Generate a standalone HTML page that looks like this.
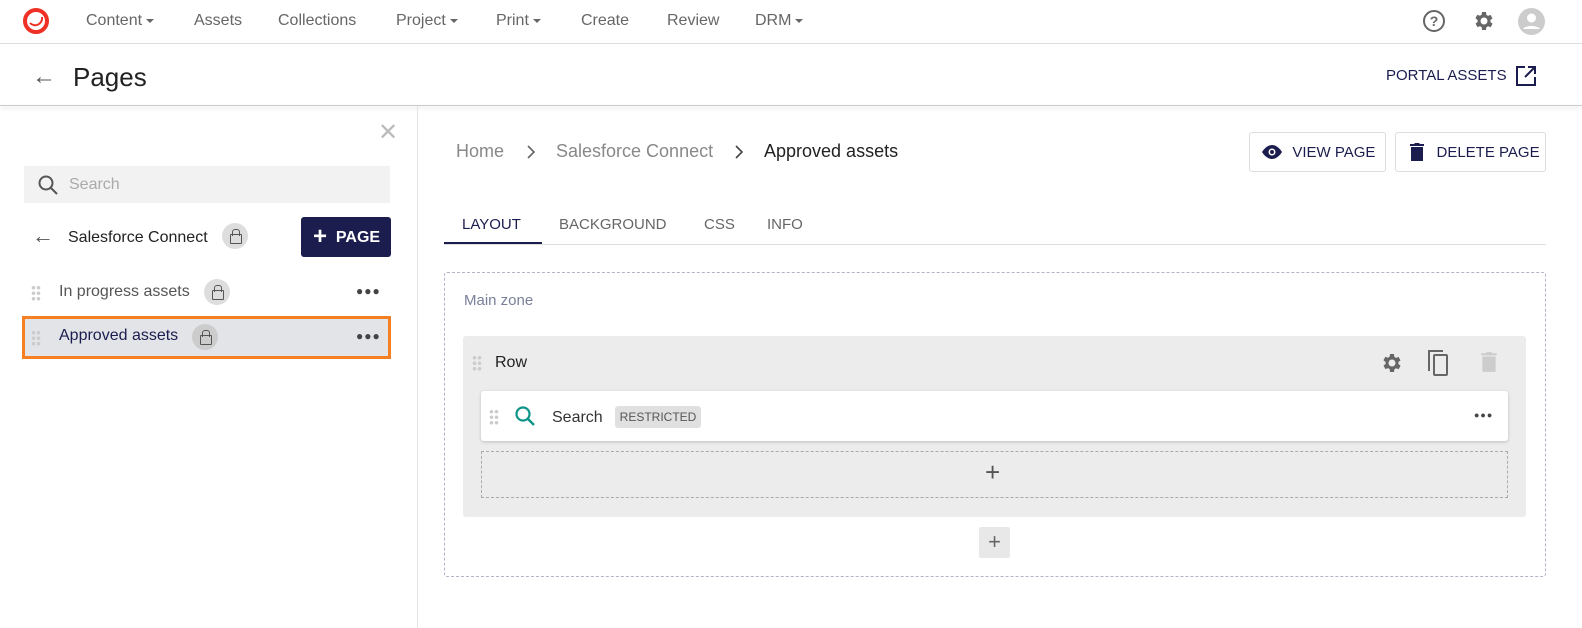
<!DOCTYPE html>
<html><head><style>
*{box-sizing:border-box;margin:0;padding:0}
body{width:1582px;height:628px;font-family:"Liberation Sans",sans-serif;background:#fff;position:relative;overflow:hidden;color:#333}
.a{position:absolute}
.nav{font-size:16px;color:#666;top:12px}
.car{display:inline-block;border-left:4px solid transparent;border-right:4px solid transparent;border-top:4px solid #666;vertical-align:middle;margin-left:4px}
.lock{display:inline-block;width:26px;height:26px;border-radius:50%;background:#ddd;position:absolute}
.lock:after{content:"";position:absolute;left:8px;top:11px;width:10px;height:8px;border:1.5px solid #555;border-radius:1px}
.lock:before{content:"";position:absolute;left:10px;top:6px;width:6px;height:6px;border:1.5px solid #555;border-bottom:none;border-radius:3px 3px 0 0}
.dots{position:absolute;width:10px;height:16px;background:radial-gradient(circle,#ccc 1.6px,transparent 2px) 0 0/5px 5.5px}
.more{position:absolute;font-size:12px;color:#444;letter-spacing:1px}
.btn{position:absolute;border:1px solid #ddd;border-radius:3px;height:40px;top:132px;font-size:15px;color:#1b1d4e;display:flex;align-items:center}
</style></head><body>
<svg class="a" style="left:22px;top:7px" width="28" height="28" viewBox="0 0 28 28"><circle cx="14" cy="14" r="11" fill="none" stroke="#ee3124" stroke-width="4"/><path d="M8 16a7 7 0 0 0 12 -6" fill="none" stroke="#ee3124" stroke-width="2"/></svg>
<div class="a nav" style="left:86px">Content<span class="car"></span></div>
<div class="a nav" style="left:194px">Assets</div>
<div class="a nav" style="left:278px">Collections</div>
<div class="a nav" style="left:396px">Project<span class="car"></span></div>
<div class="a nav" style="left:496px">Print<span class="car"></span></div>
<div class="a nav" style="left:581px">Create</div>
<div class="a nav" style="left:667px">Review</div>
<div class="a nav" style="left:755px">DRM<span class="car"></span></div>
<div class="a" style="left:1423px;top:10px;width:22px;height:22px;border:2px solid #666;border-radius:50%;font-size:14px;text-align:center;line-height:18px;color:#666;font-weight:bold">?</div>
<svg class="a" style="left:1471px;top:9px" width="24" height="24" viewBox="0 0 24 24"><path fill="#666" d="M19.4 13a7.5 7.5 0 0 0 0-2l2.1-1.6-2-3.5-2.5 1a7 7 0 0 0-1.700-1L15 3h-4l-.4 2.7a7 7 0 0 0-1.7 1l-2.5-1-2 3.5L6.6 11a7.5 7.5 0 0 0 0 2l-2.1 1.6 2 3.5 2.5-1a7 7 0 0 0 1.7 1L11 21h4l.4-2.7a7 7 0 0 0 1.7-1l2.5 1 2-3.5zM13 15.5a3.5 3.5 0 1 1 0-7 3.5 3.5 0 0 1 0 7z"/></svg>
<svg class="a" style="left:1518px;top:8px" width="27" height="27" viewBox="0 0 27 27"><circle cx="13.5" cy="13.5" r="13.5" fill="#ccc"/><circle cx="13.5" cy="10" r="4.5" fill="#fff"/><path d="M5 21c2-4 15-4 17 0" fill="#fff"/></svg>
<div class="a" style="left:0;top:43px;width:1582px;height:1px;background:#ddd"></div>
<div class="a" style="left:0;top:105px;width:1582px;height:1px;background:#ccc;box-shadow:0 2px 4px rgba(0,0,0,.2)"></div>
<div class="a" style="left:32px;top:63px;font-size:24px;color:#555">&#8592;</div>
<div class="a" style="left:73px;top:62px;font-size:26px;color:#222">Pages</div>
<div class="a" style="left:1386px;top:67px;font-size:15px;color:#1b1d4e">PORTAL ASSETS</div>
<svg class="a" style="left:1515px;top:65px" width="22" height="22" viewBox="0 0 22 22"><path d="M10 2H2v18h18v-8M13 2h7v7M20 2l-10 10" fill="none" stroke="#1b1d4e" stroke-width="2"/></svg>
<div class="a" style="left:417px;top:106px;width:1px;height:522px;background:#e5e5e5"></div>
<div class="a" style="left:378px;top:121px;font-size:24px;color:#bbb;line-height:1">&#x2715;</div>
<div class="a" style="left:24px;top:166px;width:366px;height:37px;background:#f2f2f2"></div>
<svg class="a" style="left:37px;top:174px" width="22" height="22" viewBox="0 0 22 22"><circle cx="9" cy="9" r="6.5" fill="none" stroke="#555" stroke-width="2"/><path d="M14 14l6 6" stroke="#555" stroke-width="2"/></svg>
<div class="a" style="left:69px;top:176px;font-size:16px;color:#aaa">Search</div>
<div class="a" style="left:32px;top:225px;font-size:22px;color:#555;line-height:1">&#8592;</div>
<div class="a" style="left:68px;top:229px;font-size:16px;color:#222">Salesforce Connect</div>
<div class="lock" style="left:222px;top:223px"></div>
<div class="a" style="left:301px;top:217px;width:90px;height:40px;background:#1b1d4e;border-radius:3px;color:#fff;font-weight:bold;font-size:16px;line-height:40px;padding-left:12px"><span style="font-size:24px;vertical-align:-2px">+</span>&nbsp; PAGE</div>
<div class="dots" style="left:31px;top:285px"></div>
<div class="a" style="left:59px;top:283px;font-size:16px;color:#555">In progress assets</div>
<div class="lock" style="left:204px;top:279px"></div>
<div class="more" style="left:356px;top:284px">●●●</div>
<div class="a" style="left:22px;top:316px;width:369px;height:43px;border:3px solid #f58023;background:#e3e4e8"></div>
<div class="dots" style="left:31px;top:330px"></div>
<div class="a" style="left:59px;top:327px;font-size:16px;color:#1b1d4e">Approved assets</div>
<div class="lock" style="left:192px;top:324px;background:#ccc"></div>
<div class="more" style="left:356px;top:329px">●●●</div>
<div class="a" style="left:456px;top:141px;font-size:18px;color:#888">Home</div>
<svg class="a" style="left:526px;top:144px" width="10" height="16" viewBox="0 0 10 16"><path d="M2 2l6 6-6 6" fill="none" stroke="#666" stroke-width="1.6"/></svg>
<div class="a" style="left:556px;top:141px;font-size:18px;color:#888">Salesforce Connect</div>
<svg class="a" style="left:734px;top:144px" width="10" height="16" viewBox="0 0 10 16"><path d="M2 2l6 6-6 6" fill="none" stroke="#444" stroke-width="1.6"/></svg>
<div class="a" style="left:764px;top:141px;font-size:18px;color:#222">Approved assets</div>
<div class="btn" style="left:1249px;width:137px;padding-left:10px"><svg width="24" height="16" viewBox="0 0 24 16"><path d="M12 1C6 1 2 8 2 8s4 7 10 7 10-7 10-7-4-7-10-7z" fill="#1b1d4e"/><circle cx="12" cy="8" r="3.5" fill="#fff"/><circle cx="12" cy="8" r="2" fill="#1b1d4e"/></svg>&nbsp;&nbsp;VIEW PAGE</div>
<div class="btn" style="left:1395px;width:151px;padding-left:14px"><svg width="14" height="20" viewBox="0 0 14 20"><path d="M0 2h4l1-1h4l1 1h4v2H0zM1 5h12v14H1z" fill="#1b1d4e"/></svg>&nbsp;&nbsp;&nbsp;DELETE PAGE</div>
<div class="a" style="left:462px;top:216px;font-size:15px;color:#1b1d4e">LAYOUT</div>
<div class="a" style="left:559px;top:216px;font-size:15px;color:#666">BACKGROUND</div>
<div class="a" style="left:704px;top:216px;font-size:15px;color:#666">CSS</div>
<div class="a" style="left:767px;top:216px;font-size:15px;color:#666">INFO</div>
<div class="a" style="left:444px;top:244px;width:1102px;height:1px;background:#ddd"></div>
<div class="a" style="left:444px;top:242px;width:98px;height:2px;background:#1b1d4e"></div>
<div class="a" style="left:444px;top:272px;width:1102px;height:305px;border:1px dashed #b6b0c8;border-radius:3px"></div>
<div class="a" style="left:464px;top:292px;font-size:15px;color:#7a7f99">Main zone</div>
<div class="a" style="left:463px;top:336px;width:1063px;height:181px;background:#ececec;border-radius:3px"></div>
<div class="dots" style="left:472px;top:355px"></div>
<div class="a" style="left:495px;top:354px;font-size:16px;color:#222">Row</div>
<svg class="a" style="left:1379px;top:351px" width="24" height="24" viewBox="0 0 24 24"><path fill="#666" d="M19.4 13a7.5 7.5 0 0 0 0-2l2.1-1.6-2-3.5-2.5 1a7 7 0 0 0-1.7-1L15 3h-4l-.4 2.7a7 7 0 0 0-1.7 1l-2.5-1-2 3.5L6.6 11a7.5 7.5 0 0 0 0 2l-2.1 1.6 2 3.5 2.5-1a7 7 0 0 0 1.7 1L11 21h4l.4-2.7a7 7 0 0 0 1.7-1l2.5 1 2-3.5zM13 15.5a3.5 3.5 0 1 1 0-7 3.5 3.5 0 0 1 0 7z"/></svg>
<svg class="a" style="left:1427px;top:349px" width="24" height="28" viewBox="0 0 24 28"><path d="M2 22V2h14" fill="none" stroke="#666" stroke-width="2"/><rect x="7" y="6" width="13" height="20" rx="1" fill="none" stroke="#666" stroke-width="2"/></svg>
<svg class="a" style="left:1480px;top:351px" width="18" height="22" viewBox="0 0 14 20"><path d="M0 2h4l1-1h4l1 1h4v2H0zM1 5h12v14H1z" fill="#ccc"/></svg>
<div class="a" style="left:481px;top:391px;width:1027px;height:50px;background:#fff;border-radius:3px;box-shadow:0 1px 3px rgba(0,0,0,.2)"></div>
<div class="dots" style="left:489px;top:409px"></div>
<svg class="a" style="left:514px;top:405px" width="22" height="22" viewBox="0 0 22 22"><circle cx="9" cy="9" r="6.5" fill="none" stroke="#0d9488" stroke-width="2.2"/><path d="M14 14l6 6" stroke="#0d9488" stroke-width="2.4"/></svg>
<div class="a" style="left:552px;top:409px;font-size:16px;color:#333">Search</div>
<div class="a" style="left:615px;top:406px;width:86px;height:22px;background:#e0e0e0;border-radius:3px;font-size:12px;color:#555;line-height:22px;text-align:center">RESTRICTED</div>
<div class="more" style="left:1474px;top:410px;font-size:9px">●●●</div>
<div class="a" style="left:481px;top:451px;width:1027px;height:47px;border:1px dashed #aaa"></div>
<div class="a" style="left:985px;top:457px;font-size:26px;color:#555;font-weight:300">+</div>
<div class="a" style="left:979px;top:527px;width:31px;height:31px;background:#e8e8e8;border-radius:2px;font-size:22px;color:#666;text-align:center;line-height:30px">+</div>
</body></html>
